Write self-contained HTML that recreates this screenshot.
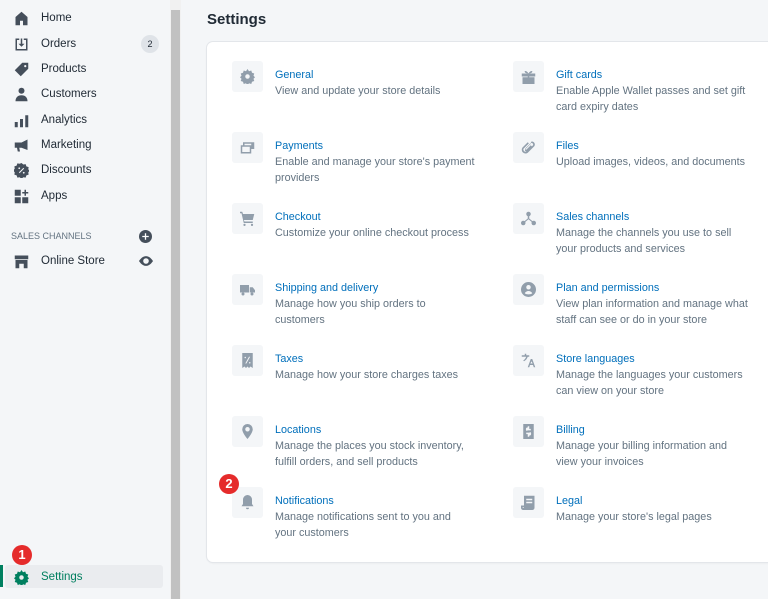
<!DOCTYPE html>
<html><head><meta charset="utf-8"><style>
*{margin:0;padding:0;box-sizing:border-box}
body{width:768px;height:599px;overflow:hidden;background:#f4f6f8;font-family:"Liberation Sans",sans-serif;position:relative;color:#212b36}
.sb{position:absolute;left:0;top:0;width:170px;height:599px;background:#f4f6f8}
.scroll{position:absolute;left:170px;top:0;width:11px;height:599px;background:#f1f1f1}
.scroll div{position:absolute;left:1px;top:10px;width:9px;height:589px;background:#c1c1c1}
.ni{position:absolute;left:0;height:24px;width:165px;font-size:11.5px;color:#212b36;line-height:24px}
.ni .t{position:absolute;left:41px}
.ni svg{position:absolute;left:14px;top:5px;width:15px;height:15px;fill:#454f5b}
.badge{position:absolute;left:141px;top:3px;width:18px;height:18px;border-radius:9px;background:#dfe3e8;font-size:9px;text-align:center;line-height:18px;font-weight:normal}
.sc{position:absolute;left:11px;top:231px;font-size:9px;color:#637381}
h1{position:absolute;left:207px;top:11px;font-size:15px;font-weight:bold;color:#212b36}
.card{position:absolute;left:207px;top:42px;width:580px;height:520px;background:#fff;border-radius:6px;box-shadow:0 0 0 1px #e3e6ea,0 1px 2px rgba(0,0,0,.08)}
.it{position:absolute;width:240px}
.ic{position:absolute;left:0;top:-8px;width:31px;height:31px;background:#f4f6f8;border-radius:3px}
.ic svg{position:absolute;left:8px;top:8px;width:15px;height:15px;fill:#919eab}
.tt{position:absolute;left:43px;top:0;font-size:10.8px;color:#006fbb;white-space:nowrap}
.d{position:absolute;left:43px;top:15px;font-size:10.8px;color:#637381;line-height:15.5px;width:200px}
.num{position:absolute;width:20px;height:20px;border-radius:10px;background:#e52b2b;color:#fff;font-weight:bold;font-size:13px;text-align:center;line-height:20px}
</style></head><body>
<div class="sb">
<div class="ni" style="top:6px"><svg viewBox="0 0 20 20"><path d="M10 1L2 8v11h6v-6h4v6h6V8z"/></svg><span class="t">Home</span></div>
<div class="ni" style="top:32px"><svg viewBox="0 0 20 20"><path d="M2 2h5v2H4v12h12V4h-3V2h5v16H2zM9 2h2v7h3l-4 4-4-4h3z"/></svg><span class="t">Orders</span><span class="badge">2</span></div>
<div class="ni" style="top:57px"><svg viewBox="0 0 20 20"><path d="M11 1h8v8l-10 10-8-8zM15 4a1.5 1.5 0 100 3 1.5 1.5 0 000-3z"/></svg><span class="t">Products</span></div>
<div class="ni" style="top:82px"><svg viewBox="0 0 20 20"><circle cx="10" cy="5" r="4"/><path d="M2 19c0-5 3-8 8-8s8 3 8 8z"/></svg><span class="t">Customers</span></div>
<div class="ni" style="top:108px"><svg viewBox="0 0 20 20"><path d="M1 12h4v7H1zM8 8h4v11H8zM15 3h4v16h-4z"/></svg><span class="t">Analytics</span></div>
<div class="ni" style="top:133px"><svg viewBox="0 0 20 20"><path d="M18 2v14l-8-3H7l1 5H5l-1-5H1V6h9z"/></svg><span class="t">Marketing</span></div>
<div class="ni" style="top:158px"><svg viewBox="0 0 20 20"><path d="M10 0l2.5 2 3-.5 1 3 3 1-.5 3L21 10l-2 2.5.5 3-3 1-1 3-3-.5L10 21l-2.5-2-3 .5-1-3-3-1 .5-3L-1 10l2-2.5-.5-3 3-1 1-3 3 .5z"/><path d="M6.5 12.5l6-6 1 1-6 6z" fill="#f4f6f8"/><circle cx="7" cy="7" r="1.2" fill="#f4f6f8"/><circle cx="13" cy="13" r="1.2" fill="#f4f6f8"/></svg><span class="t">Discounts</span></div>
<div class="ni" style="top:184px"><svg viewBox="0 0 20 20"><path d="M1 1h8v8H1zM1 11h8v8H1zM11 11h8v8h-8zM14 1h2v3h3v2h-3v3h-2V6h-3V4h3z"/></svg><span class="t">Apps</span></div>
<div class="sc">SALES CHANNELS</div>
<svg style="position:absolute;left:139px;top:230px" width="13" height="13" viewBox="0 0 20 20"><circle cx="10" cy="10" r="10" fill="#454f5b"/><path d="M9 5h2v4h4v2h-4v4H9v-4H5V9h4z" fill="#fff"/></svg>
<div class="ni" style="top:249px"><svg viewBox="0 0 20 20"><path d="M1 2h18v5H1zM2 8h16v11h-5v-6H7v6H2z"/></svg><span class="t">Online Store</span><svg style="left:139px;top:6px;width:14px;height:12px" viewBox="0 0 20 14"><path d="M10 0C4 0 0 7 0 7s4 7 10 7 10-7 10-7S16 0 10 0zm0 11a4 4 0 110-8 4 4 0 010 8z"/></svg></div>
<div style="position:absolute;left:0;top:565px;width:3px;height:22px;background:#008060"></div>
<div style="position:absolute;left:5px;top:565px;width:158px;height:23px;background:#eaecef;border-radius:3px"></div>
<div class="ni" style="top:565px;color:#007f5f"><svg viewBox="0 0 20 20" style="fill:#007f5f"><path d="M10 0l2 3 3-1 1 3 3 1-1 3 2 2-2 2 1 3-3 1-1 3-3-1-2 3-2-3-3 1-1-3-3-1 1-3-2-2 2-2-1-3 3-1 1-3 3 1zm0 7a3 3 0 100 6 3 3 0 000-6z"/></svg><span class="t">Settings</span></div>
<div class="num" style="left:12px;top:545px">1</div>
</div>
<div class="scroll"><div></div></div>
<h1>Settings</h1>
<div class="card">
<div class="it" style="left:25px;top:27px"><div class="ic"><svg viewBox="0 0 20 20"><path d="M10 0l2 3 3-1 1 3 3 1-1 3 2 2-2 2 1 3-3 1-1 3-3-1-2 3-2-3-3 1-1-3-3-1 1-3-2-2 2-2-1-3 3-1 1-3 3 1zm0 7a3 3 0 100 6 3 3 0 000-6z"/></svg></div><div class="tt">General</div><div class="d">View and update your store details</div></div>
<div class="it" style="left:25px;top:98px"><div class="ic"><svg viewBox="0 0 20 20"><path d="M4 3h15v9h-4v6H1V7h3zm2 2v2h9V5zM3 9v7h10V9z"/></svg></div><div class="tt">Payments</div><div class="d">Enable and manage your store's payment providers</div></div>
<div class="it" style="left:25px;top:169px"><div class="ic"><svg viewBox="0 0 20 20"><path d="M0 1h3l1 3h15l-2 8H5l1 2h11v2H5L2 3H0zM6 17a1.5 1.5 0 110 3 1.5 1.5 0 010-3zm10 0a1.5 1.5 0 110 3 1.5 1.5 0 010-3z"/></svg></div><div class="tt">Checkout</div><div class="d">Customize your online checkout process</div></div>
<div class="it" style="left:25px;top:240px"><div class="ic"><svg viewBox="0 0 20 20"><path d="M0 4h12v10H0zM13 7h4l3 4v3h-7zM4 14a2 2 0 110 4 2 2 0 010-4zm12 0a2 2 0 110 4 2 2 0 010-4z"/></svg></div><div class="tt">Shipping and delivery</div><div class="d" style="width:165px">Manage how you ship orders to customers</div></div>
<div class="it" style="left:25px;top:311px"><div class="ic"><svg viewBox="0 0 20 20"><path d="M3 0h14v20l-3-2-2 2-2-2-2 2-2-2-3 2zm4 5a1 1 0 100 2 1 1 0 000-2zm6 7a1 1 0 100 2 1 1 0 000-2zM12 5l-5 9h1.5l5-9z"/></svg></div><div class="tt">Taxes</div><div class="d">Manage how your store charges taxes</div></div>
<div class="it" style="left:25px;top:382px"><div class="ic"><svg viewBox="0 0 20 20"><path d="M10 0a7 7 0 017 7c0 5-7 13-7 13S3 12 3 7a7 7 0 017-7zm0 4a3 3 0 100 6 3 3 0 000-6z"/></svg></div><div class="tt">Locations</div><div class="d">Manage the places you stock inventory, fulfill orders, and sell products</div></div>
<div class="it" style="left:25px;top:453px"><div class="ic"><svg viewBox="0 0 20 20"><path d="M10 0a6 6 0 016 6v6l2 3H2l2-3V6a6 6 0 016-6zM8 17h4a2 2 0 01-4 0z"/></svg></div><div class="tt">Notifications</div><div class="d" style="width:185px">Manage notifications sent to you and your customers</div></div>
<div class="num" style="left:12px;top:432px">2</div>
<div class="it" style="left:306px;top:27px"><div class="ic"><svg viewBox="0 0 20 20"><path d="M1 6h18v4H1zM2 11h16v9H2zM9 6h2v14H9zM10 6C8 2 4 2 5 4s5 2 5 2 4 0 5-2-3-2-5 2z"/></svg></div><div class="tt">Gift cards</div><div class="d" style="width:195px">Enable Apple Wallet passes and set gift card expiry dates</div></div>
<div class="it" style="left:306px;top:98px"><div class="ic"><svg viewBox="0 0 20 20"><path d="M14 2a4 4 0 013 7l-8 8a5 5 0 01-7-7l7-7 1.5 1.5-7 7a3 3 0 004 4l8-8a2 2 0 00-3-3l-7 7 1.5 1.5 6-6L15 9l-6 6a2 2 0 01-3-3l7-7a4 4 0 011-3z"/></svg></div><div class="tt">Files</div><div class="d" style="width:215px">Upload images, videos, and documents</div></div>
<div class="it" style="left:306px;top:169px"><div class="ic"><svg viewBox="0 0 20 20"><circle cx="10" cy="4" r="3"/><circle cx="3" cy="16" r="3"/><circle cx="17" cy="16" r="3"/><path d="M9 4h2v6l6 5-1 1-6-5-6 5-1-1 6-5z"/></svg></div><div class="tt">Sales channels</div><div class="d" style="width:185px">Manage the channels you use to sell your products and services</div></div>
<div class="it" style="left:306px;top:240px"><div class="ic"><svg viewBox="0 0 20 20"><path d="M10 0a10 10 0 110 20 10 10 0 010-20zm0 4a3 3 0 100 6 3 3 0 000-6zm-5 11c2 2 8 2 10 0-1-2-3-3-5-3s-4 1-5 3z"/></svg></div><div class="tt">Plan and permissions</div><div class="d" style="width:205px">View plan information and manage what staff can see or do in your store</div></div>
<div class="it" style="left:306px;top:311px"><div class="ic"><svg viewBox="0 0 20 20"><path d="M1 3h4V1h2v2h4v2H9c-1 3-3 5-5 6l-1-1c2-1 3-3 4-5H1zM13 8h2l4 11h-2l-1-3h-4l-1 3H9zm1 3l-1.5 3h3z"/></svg></div><div class="tt">Store languages</div><div class="d" style="width:195px">Manage the languages your customers can view on your store</div></div>
<div class="it" style="left:306px;top:382px"><div class="ic"><svg viewBox="0 0 20 20"><path d="M3 0h14v20H3zm6 3v1.5a2.5 2.5 0 000 5h2a1 1 0 010 2H7v2h2V17h2v-1.5a2.5 2.5 0 000-5H9a1 1 0 010-2h4v-2h-2V3z"/></svg></div><div class="tt">Billing</div><div class="d" style="width:185px">Manage your billing information and view your invoices</div></div>
<div class="it" style="left:306px;top:453px"><div class="ic"><svg viewBox="0 0 20 20"><path d="M4 1h14v16a3 3 0 01-3 3H3a3 3 0 01-3-3v-3h4zm3 4v2h8V5zm0 4v2h8V9zm-5 7a1 1 0 002 0z"/></svg></div><div class="tt">Legal</div><div class="d">Manage your store's legal pages</div></div>
</div>
</body></html>
